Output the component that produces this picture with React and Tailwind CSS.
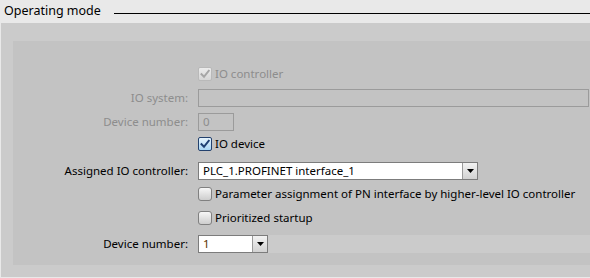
import React from "react";

const font = { fontFamily: '"Noto Sans", "Open Sans", sans-serif' };

function CheckMark({ color }) {
  return (
    <svg width="10" height="10" viewBox="0 0 10 10" className="block">
      <path d="M1.5 5.2 L4 7.8 L8.7 1.8" fill="none" stroke={color} strokeWidth="2" strokeLinecap="square" />
    </svg>
  );
}

function Checkbox({ state }) {
  if (state === "disabled-checked") {
    return (
      <div className="w-[14px] h-[14px] rounded-[2px] border border-[#b9b9b9] bg-gradient-to-b from-[#ececec] to-[#d6d6d6] flex items-center justify-center shrink-0">
        <CheckMark color="#a6a6a6" />
      </div>
    );
  }
  if (state === "checked") {
    return (
      <div className="w-[14px] h-[14px] rounded-[2px] border border-[#23416d] bg-gradient-to-b from-[#e6f4fd] to-[#a9d6f5] flex items-center justify-center shrink-0">
        <CheckMark color="#1e3f73" />
      </div>
    );
  }
  return (
    <div className="w-[14px] h-[14px] rounded-[3px] border border-[#808080] bg-gradient-to-b from-[#f7f7f7] to-[#cdcdcd] shrink-0" />
  );
}

function Arrow() {
  return (
    <svg width="7" height="4" viewBox="0 0 7 4" className="block">
      <path d="M0 0 H7 L3.5 4 Z" fill="#000" />
    </svg>
  );
}

function Dropdown({ width, text, textClass = "text-black" }) {
  return (
    <div className={`${width} h-[18px] border border-[#7c7c7c] bg-white flex`}>
      <div className={`flex-1 flex items-center pl-[4px] text-[11.5px] leading-none ${textClass}`}>{text}</div>
      <div className="w-[15px] h-full border-l border-[#9a9a9a] bg-gradient-to-b from-[#f2f2f2] to-[#d2d2d2] flex items-center justify-center">
        <Arrow />
      </div>
    </div>
  );
}

function Label({ children, disabled }) {
  return (
    <div className={`w-[175px] text-right pr-0 text-[11.5px] leading-none ${disabled ? "text-[#8d8d8d]" : "text-black"}`}>
      {children}
    </div>
  );
}

export default function App() {
  return (
    <div className="w-[590px] h-[278px] bg-[#e9e9e9] overflow-hidden" style={font}>
      <div className="h-[23px] flex items-center pl-[4px]">
        <span className="text-[12.5px] leading-none text-black whitespace-nowrap -mt-[1px]">Operating mode</span>
        <div className="flex-1 ml-[13px] h-[1px] bg-black mt-[3px]" />
      </div>
      <div className="ml-[1px] bg-[#cbcbcb] pt-[18px] pb-[12px] pl-[12px]">
        <div className="bg-[#c3c3c3] pt-[26px] pb-[10px] flex flex-col">
          <div className="h-[13px] flex items-center pl-[185px] gap-[3px]">
            <Checkbox state="disabled-checked" />
            <span className="text-[11.5px] leading-none text-[#8d8d8d] whitespace-nowrap">IO controller</span>
          </div>
          <div className="h-[18px] mt-[9px] flex items-center gap-[10px]">
            <Label disabled>IO system:</Label>
            <div className="w-[391px] h-[18px] border border-[#9b9b9b]" />
          </div>
          <div className="h-[18px] mt-[6px] flex items-center gap-[10px]">
            <Label disabled>Device number:</Label>
            <div className="w-[36px] h-[18px] border border-[#9b9b9b] flex items-center pl-[4px] text-[11.5px] leading-none text-[#8d8d8d]">0</div>
          </div>
          <div className="h-[14px] mt-[6px] flex items-center pl-[185px] gap-[3px]">
            <Checkbox state="checked" />
            <span className="text-[11.5px] leading-none text-black whitespace-nowrap">IO device</span>
          </div>
          <div className="h-[18px] mt-[11px] flex items-center gap-[10px]">
            <Label>Assigned IO controller:</Label>
            <Dropdown width="w-[280px]" text="PLC_1.PROFINET interface_1" />
          </div>
          <div className="h-[14px] mt-[7px] flex items-center pl-[185px] gap-[3px]">
            <Checkbox state="unchecked" />
            <span className="text-[11.5px] leading-none text-black whitespace-nowrap">Parameter assignment of PN interface by higher-level IO controller</span>
          </div>
          <div className="h-[14px] mt-[10px] flex items-center pl-[185px] gap-[3px]">
            <Checkbox state="unchecked" />
            <span className="text-[11.5px] leading-none text-black whitespace-nowrap">Prioritized startup</span>
          </div>
        </div>
        <div className="flex h-[18px]">
          <div className="bg-[#c3c3c3] flex items-center gap-[10px]">
            <Label>Device number:</Label>
            <Dropdown width="w-[70px]" text="1" textClass="text-[#5a3000]" />
          </div>
          <div className="flex-1" />
        </div>
        <div className="bg-[#c3c3c3] h-[12px]" />
      </div>
    </div>
  );
}
